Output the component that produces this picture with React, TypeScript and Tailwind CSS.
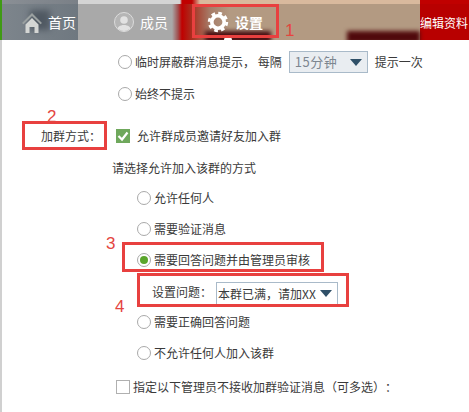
const Radio = ({ checked = false }: { checked?: boolean }) => (
  <span className="flex h-[14px] w-[14px] shrink-0 items-center justify-center rounded-full border border-[#a9a9a9] bg-white">
    {checked && <span className="h-2 w-2 rounded-full bg-[#5aa52c]" />}
  </span>
);

const Caret = () => (
  <svg width="12" height="7" viewBox="0 0 12 7" className="shrink-0">
    <path d="M0 0h12L6 7z" fill="#2f5068" />
  </svg>
);

const RadioRow = ({ label, checked, className }: { label: string; checked?: boolean; className: string }) => (
  <div className={`flex h-[30px] items-center gap-[3px] pl-[137px] ${className}`}>
    <Radio checked={checked} />
    <span>{label}</span>
  </div>
);

// red hand-drawn marks on top of the screenshot
const Mark = ({ className }: { className: string }) => (
  <div className={`absolute border-[3px] border-[#e8403f] ${className}`} />
);
const Num = ({ n, className }: { n: string; className: string }) => (
  <span className={`absolute text-[17px] leading-none text-[#e4453f] font-['Liberation_Sans',sans-serif] ${className}`}>{n}</span>
);

export default function App() {
  return (
    <div className="relative h-[412px] w-[469px] overflow-hidden bg-white text-xs text-[#3a3a3a] [text-spacing-trim:space-all] font-['Noto_Sans_CJK_SC','Noto_Sans',sans-serif]">
      {/* blurred banner behind the nav */}
      <div className="relative flex h-10 items-center overflow-hidden bg-[linear-gradient(90deg,#3f9a14_0,#3f9a14_2px,#7d858c_2px,#6f7880_78px,#a9a9a9_78px,#a9a9a9_172px,#a05050_178px,#c00000_182px,#a83020_192px,#a67c68_210px,#b39a82_230px,#b39a82_420px,#b80000_420px,#b80000_469px)] pt-[4px] text-white">
        <div className="absolute inset-x-0 top-0 h-1 bg-[linear-gradient(90deg,#3f9a14_0,#3f9a14_2px,#8a8f95_2px,#7a8087_78px,#d4d4d4_78px,#d4d4d4_180px,#c00000_182px,#c00000_192px,#d9b99d_200px,#d9b99d_420px,#c00000_420px)]" />
        <div className="absolute left-[205px] top-[31px] h-[12px] w-[66px] bg-[#4a0f12] blur-[2px]" />
        <div className="absolute left-[347px] top-[31px] h-[12px] w-[73px] bg-[#50090c] blur-[2px]" />
        <div className="absolute left-[30px] top-[10px] h-[20px] w-[20px] bg-[#4f5862] blur-[3px]" />

        <div className="relative ml-[22px] flex items-center gap-[6px]">
          <svg width="20" height="21" viewBox="0 0 20 21">
            <path d="M10 1 0 11l1.5 1.2L10 4l8.5 8.200L20 11z" fill="#9aa0a0" />
            <path d="M3.500 12.500 10 6l6.500 6.500V21h-4v-6h-5v6h-4z" fill="#d4d6d4" />
          </svg>
          <span className="text-sm">首页</span>
        </div>
        <div className="relative ml-[38px] flex items-center gap-[6px]">
          <span className="relative flex h-5 w-5 items-center justify-center overflow-hidden rounded-full border border-[#dcdcdc] bg-[#b5b5b5]">
            <svg width="18" height="18" viewBox="0 0 18 18">
              <circle cx="9" cy="7" r="3.800" fill="#e2e2e2" />
              <path d="M2 18c0-4 3-6 7-6s7 2 7 6z" fill="#e2e2e2" />
            </svg>
          </span>
          <span className="text-sm">成员</span>
        </div>
        <div className="relative ml-[39px] flex items-center gap-[6px]">
          <svg width="22" height="22" viewBox="0 0 22 22" fill="none" stroke="#ffffff">
            <circle cx="11" cy="11" r="6.200" strokeWidth="3.600" />
            <circle cx="11" cy="11" r="8.800" strokeWidth="2.800" strokeDasharray="3.700 3.210" />
          </svg>
          <span className="text-sm font-bold">设置</span>
        </div>
        <span className="absolute left-[420px] top-[15px] whitespace-nowrap text-xs leading-4">编辑资料</span>
      </div>
      <div className="absolute left-[224px] top-[37px] h-[6px] w-[8px] rounded-full bg-white" />
      <div className="absolute bottom-0 left-0 top-10 w-[2px] bg-[#d0d0d0]" />

      {/* settings form */}
      <div className="flex flex-col pt-[7px]">
        <div className="flex h-[30px] items-center pl-[118px]">
          <Radio />
          <span className="ml-[3px] whitespace-pre">临时屏蔽群消息提示， 每隔</span>
          <span className="ml-[7px] flex h-[22px] w-[79px] items-center justify-between border border-[#a9bac9] bg-[#e9edf1] pl-[5px] pr-[5px] text-[13px] tracking-[0.5px] text-[#7d8690]">
            15分钟
            <Caret />
          </span>
          <span className="ml-[7px]">提示一次</span>
        </div>
        <div className="mt-[2px] flex h-[30px] items-center pl-[118px]">
          <Radio />
          <span className="ml-[3px]">始终不提示</span>
        </div>

        <div className="mt-[12px] flex h-[30px] items-center">
          <span className="w-[116px] pr-[15px] text-right">加群方式：</span>
          <span className="flex h-[14px] w-[14px] items-center justify-center bg-[#6fa85c]">
            <svg width="12" height="12" viewBox="0 0 12 12">
              <path d="M1.500 6 5 9.500 10.500 2.500" fill="none" stroke="#ffffff" strokeWidth="2.200" />
            </svg>
          </span>
          <span className="ml-[7px]">允许群成员邀请好友加入群</span>
        </div>
        <div className="mt-[2px] flex h-[30px] items-center pl-[112px]">请选择允许加入该群的方式</div>

        <RadioRow label="允许任何人" className="" />
        <RadioRow label="需要验证消息" className="mt-px" />
        <RadioRow label="需要回答问题并由管理员审核" checked className="mt-px" />

        <div className="mt-[2px] flex h-[30px] items-center pl-[152px]">
          <span className="w-[64px]">设置问题：</span>
          <span className="flex h-[22px] w-[122px] translate-y-px items-center justify-between border border-b-0 border-[#a9bac9] pl-px pr-[5px]">
            本群已满，请加XX
            <Caret />
          </span>
        </div>

        <RadioRow label="需要正确回答问题" className="" />
        <RadioRow label="不允许任何人加入该群" className="mt-px" />

        <div className="mt-[4px] flex h-[30px] items-center pl-[116px]">
          <span className="h-[14px] w-[14px] border border-[#b0b0b0]" />
          <span className="ml-[3px]">指定以下管理员不接收加群验证消息（可多选）：</span>
        </div>
      </div>

      <Mark className="left-[192px] top-[4px] h-[34px] w-[87px]" />
      <Mark className="left-[22px] top-[121px] h-[29px] w-[85px]" />
      <Mark className="left-[122px] top-[242px] h-[30px] w-[202px]" />
      <Mark className="left-[137px] top-[273px] h-[34px] w-[212px]" />
      <Num n="1" className="left-[285px] top-[22px]" />
      <Num n="2" className="left-[47px] top-[108px]" />
      <Num n="3" className="left-[106px] top-[235px]" />
      <Num n="4" className="left-[115px] top-[298px]" />
    </div>
  );
}
